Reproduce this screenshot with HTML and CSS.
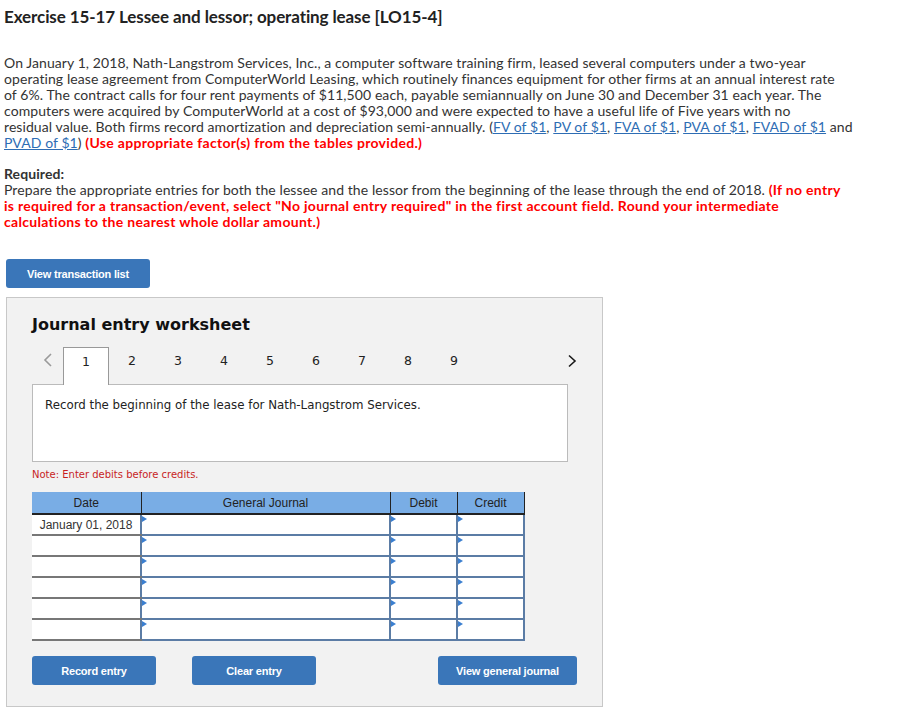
FILE: index.html
```html
<!DOCTYPE html>
<html>
<head>
<meta charset="utf-8">
<link rel="stylesheet" href="styles.css">
</head>
<body>
<div class="page">
  <h1 class="title">Exercise 15-17 Lessee and lessor; operating lease [LO15-4]</h1>
  <p class="intro">On January 1, 2018, Nath-Langstrom Services, Inc., a computer software training firm, leased several computers under a two-year<br>operating lease agreement from ComputerWorld Leasing, which routinely finances equipment for other firms at an annual interest rate<br>of 6%. The contract calls for four rent payments of $11,500 each, payable semiannually on June 30 and December 31 each year. The<br>computers were acquired by ComputerWorld at a cost of $93,000 and were expected to have a useful life of Five years with no<br>residual value. Both firms record amortization and depreciation semi-annually. (<a class="lnk">FV of $1</a>, <a class="lnk">PV of $1</a>, <a class="lnk">FVA of $1</a>, <a class="lnk">PVA of $1</a>, <a class="lnk">FVAD of $1</a> and<br><a class="lnk">PVAD of $1</a>) <b class="red">(Use appropriate factor(s) from the tables provided.)</b></p>
  <div class="required">
    <b class="req-label">Required:</b><br>Prepare the appropriate entries for both the lessee and the lessor from the beginning of the lease through the end of 2018. <b class="red">(If no entry<br>is required for a transaction/event, select "No journal entry required" in the first account field. Round your intermediate<br>calculations to the nearest whole dollar amount.)</b>
  </div>
  <button class="btn btn-list">View transaction list</button>
  <div class="panel">
    <div class="ws-title">Journal entry worksheet</div>
    <div class="tabs">
      <span class="arrow arrow-left"><svg width="10" height="14" viewBox="0 0 10 14"><path d="M8 1 L2 7 L8 13" fill="none" stroke="#9a9a9a" stroke-width="1.6"/></svg></span>
      <span class="tab active">1</span>
      <span class="tab">2</span>
      <span class="tab">3</span>
      <span class="tab">4</span>
      <span class="tab">5</span>
      <span class="tab">6</span>
      <span class="tab">7</span>
      <span class="tab">8</span>
      <span class="tab">9</span>
      <span class="arrow arrow-right"><svg width="10" height="14" viewBox="0 0 10 14"><path d="M2 1.5 L8 7 L2 12.5" fill="none" stroke="#1a1a1a" stroke-width="1.6"/></svg></span>
    </div>
    <div class="task">Record the beginning of the lease for Nath-Langstrom Services.</div>
    <div class="note">Note: Enter debits before credits.</div>
    <table class="journal">
      <thead>
        <tr><th class="c-date">Date</th><th class="c-acct">General Journal</th><th class="c-amt">Debit</th><th class="c-amt last">Credit</th></tr>
      </thead>
      <tbody>
        <tr><td class="d">January 01, 2018</td><td class="in"></td><td class="in"></td><td class="in"></td></tr>
        <tr><td class="d"></td><td class="in"></td><td class="in"></td><td class="in"></td></tr>
        <tr><td class="d"></td><td class="in"></td><td class="in"></td><td class="in"></td></tr>
        <tr><td class="d"></td><td class="in"></td><td class="in"></td><td class="in"></td></tr>
        <tr><td class="d"></td><td class="in"></td><td class="in"></td><td class="in"></td></tr>
        <tr><td class="d"></td><td class="in"></td><td class="in"></td><td class="in"></td></tr>
      </tbody>
    </table>
    <div class="actions">
      <button class="btn btn-record">Record entry</button>
      <button class="btn btn-clear">Clear entry</button>
      <button class="btn btn-view">View general journal</button>
    </div>
  </div>
</div>
</body>
</html>
```

FILE: styles.css
```css
* { box-sizing: border-box; }
body { margin: 0; background: #fff; }
.page { padding: 6px 4px 0 4px; font-family: Lato, "Open Sans", sans-serif; color: #333; }
.title { margin: 0; font-size: 17px; line-height: 22px; font-weight: 700; color: #222; letter-spacing: -0.1px; }
.intro { margin: 27px 0 0 0; font-size: 14px; line-height: 16px; white-space: nowrap; letter-spacing: 0.08px; }
.lnk { color: #2e6db4; text-decoration: underline; }
.red { color: #f00; font-weight: 700; letter-spacing: 0.3px; }
.required { margin-top: 15px; font-size: 14px; line-height: 16px; white-space: nowrap; letter-spacing: 0.08px; }
.req-label { color: #333; }
.btn { border: none; background: #3a76b9; color: #fff; font-family: "Liberation Sans", Arial, sans-serif; font-weight: 700; font-size: 11px; letter-spacing: -0.2px; border-radius: 3px; height: 29px; padding: 0; cursor: pointer; }
.btn-list { display: block; margin: 29px 0 0 2px; width: 144px; }
.panel { margin: 9px 0 0 2px; width: 597px; height: 410px; background: #f2f2f2; border: 1px solid #c8c8c8; padding: 16px 0 0 25px; }
.ws-title { font-family: "DejaVu Sans", Verdana, sans-serif; font-weight: 700; font-size: 16px; line-height: 22px; color: #111; }
.tabs { display: flex; align-items: stretch; margin-top: 11px; height: 37px; width: 550px; position: relative; }
.arrow { display: flex; align-items: center; justify-content: center; }
.arrow-left { width: 31px; padding-bottom: 11px; }
.arrow-right { margin-left: auto; width: 20px; padding-bottom: 9px; }
.tab { width: 46px; text-align: center; font-family: "DejaVu Sans", Tahoma, sans-serif; font-size: 12.5px; line-height: 24px; padding-top: 2px; color: #222; }
.tab.active { background: #fff; border: 1px solid #999; border-bottom: none; margin-bottom: -1px; position: relative; z-index: 1; height: 38px; }
.task { width: 536px; height: 78px; background: #fff; border: 1px solid #bbb; padding: 12px 0 0 12px; font-family: "DejaVu Sans", Tahoma, sans-serif; font-size: 11.8px; line-height: 16px; color: #222; }
.note { margin-top: 6px; font-family: "DejaVu Sans", Tahoma, sans-serif; font-size: 10px; line-height: 14px; color: #c81e1e; }
.journal { margin-top: 10px; border-collapse: collapse; font-family: "Liberation Sans", Arial, sans-serif; table-layout: fixed; width: 492px; }
.journal th { background: #79ade5; height: 22px; font-weight: 400; font-size: 12px; color: #222; border-right: 1px solid #222; border-bottom: 2px solid #222; padding: 0; }
.c-date { width: 109px; }
.c-acct { width: 249px; }
.c-amt { width: 67px; }
.journal td { height: 21px; padding: 0; background: #fff; }
.journal td.d { border-bottom: 2px solid #777; font-size: 12px; color: #333; text-align: center; }
.journal td.in { border: 2px solid #5b7ca5; position: relative; }
.journal td.in::before { content: ""; position: absolute; left: 0; top: 1px; border-left: 5px solid #3b7fd0; border-top: 3px solid transparent; border-bottom: 3px solid transparent; }
.actions { display: flex; margin-top: 15px; width: 545px; }
.btn-record, .btn-clear { width: 124px; }
.btn-clear { margin-left: 36px; }
.btn-view { width: 139px; margin-left: auto; }
```
